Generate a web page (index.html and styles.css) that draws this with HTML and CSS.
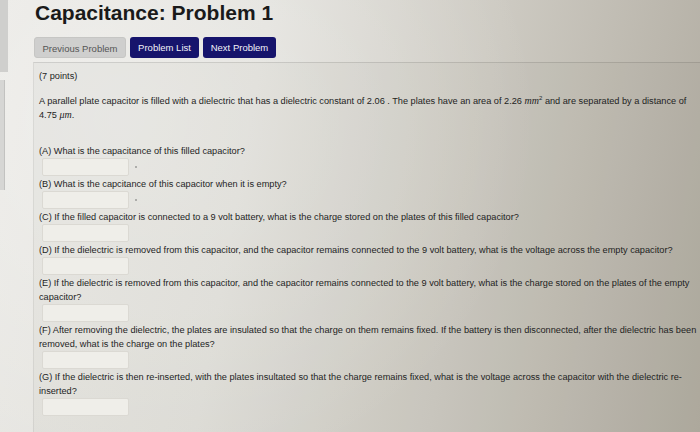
FILE: index.html
```html
<!DOCTYPE html>
<html>
<head>
<meta charset="utf-8">
<link rel="stylesheet" href="styles.css">
</head>
<body>
<div class="page">
  <div class="side">
    <div class="side-top"></div>
    <div class="side-mid"></div>
  </div>
  <div class="main">
    <h1 class="title">Capacitance: Problem 1</h1>
    <div class="nav">
      <span class="btn btn-prev">Previous Problem</span>
      <span class="btn btn-dark btn-list">Problem List</span>
      <span class="btn btn-dark btn-next">Next Problem</span>
    </div>
    <div class="panel">
      <p class="points">(7 points)</p>
      <p class="intro">A parallel plate capacitor is filled with a dielectric that has a dielectric constant of 2.06 . The plates have an area of 2.26 <span class="math">mm</span><sup class="sup">2</sup> and are separated by a distance of<br>4.75 <span class="math">μm</span>.</p>
      <div class="questions">
        <div class="q">
          <p class="qt">(A) What is the capacitance of this filled capacitor?</p>
          <div class="ans"><span class="box"></span><span class="dot"></span></div>
        </div>
        <div class="q">
          <p class="qt">(B) What is the capcitance of this capacitor when it is empty?</p>
          <div class="ans"><span class="box"></span><span class="dot"></span></div>
        </div>
        <div class="q">
          <p class="qt">(C) If the filled capacitor is connected to a 9 volt battery, what is the charge stored on the plates of this filled capacitor?</p>
          <div class="ans"><span class="box"></span></div>
        </div>
        <div class="q">
          <p class="qt">(D) If the dielectric is removed from this capacitor, and the capacitor remains connected to the 9 volt battery, what is the voltage across the empty capacitor?</p>
          <div class="ans"><span class="box"></span></div>
        </div>
        <div class="q">
          <p class="qt">(E) If the dielectric is removed from this capacitor, and the capacitor remains connected to the 9 volt battery, what is the charge stored on the plates of the empty<br>capacitor?</p>
          <div class="ans"><span class="box"></span></div>
        </div>
        <div class="q">
          <p class="qt">(F) After removing the dielectric, the plates are insulated so that the charge on them remains fixed. If the battery is then disconnected, after the dielectric has been<br>removed, what is the charge on the plates?</p>
          <div class="ans"><span class="box"></span></div>
        </div>
        <div class="q">
          <p class="qt">(G) If the dielectric is then re-inserted, with the plates insultated so that the charge remains fixed, what is the voltage across the capacitor with the dielectric re-<br>inserted?</p>
          <div class="ans"><span class="box"></span></div>
        </div>
      </div>
    </div>
  </div>
</div>
</body>
</html>
```
FILE: styles.css
```css
* { box-sizing: border-box; }
html, body { margin: 0; padding: 0; }
body {
  width: 700px;
  height: 432px;
  overflow: hidden;
  font-family: "Liberation Sans", Arial, sans-serif;
  color: #1e1e1e;
  background:
    radial-gradient(ellipse 420px 380px at 120px 120px, rgba(255,255,255,0.35), rgba(255,255,255,0) 100%),
    linear-gradient(100deg, #e9e8e4 0%, #e1e0db 35%, #cdcac2 65%, #b0aba0 100%);
}
.page {
  display: flex;
  height: 432px;
}
.side {
  width: 8px;
  display: flex;
  flex-direction: column;
}
.side-top {
  height: 72px;
  background: #cfcfcd;
}
.side-mid {
  margin-top: 8px;
  width: 5px;
  height: 110px;
  background: #d6d6d4;
  border-right: 1px solid #c2c2c0;
}
.main {
  flex: 1;
  padding-left: 25px;
  display: flex;
  flex-direction: column;
}
.title {
  margin: 0 0 0 2px;
  font-size: 21px;
  line-height: 26px;
  font-weight: bold;
  color: #1a1a1a;
}
.nav {
  display: flex;
  gap: 4px;
  margin-top: 11px;
  margin-left: 1px;
}
.btn {
  height: 21px;
  line-height: 21px;
  font-size: 9.5px;
  border-radius: 3px;
  text-align: center;
}
.btn-prev {
  width: 92px;
  background: #cfcfce;
  color: #555;
  border: 1px solid #c6c6c4;
}
.btn-dark {
  background: #16146c;
  color: #f2f2f8;
}
.btn-list { width: 69px; }
.btn-next { width: 73px; }
.panel {
  flex: 1;
  margin-top: 4px;
  padding: 6px 0 0 5px;
  border-top: 1px solid rgba(0,0,0,0.10);
  border-left: 1px solid rgba(0,0,0,0.06);
  background: rgba(120,115,105,0.05);
}
.panel p {
  margin: 0;
  font-size: 9.2px;
  line-height: 14px;
}
.intro {
  margin-top: 11px !important;
}
.math {
  font-family: "Liberation Serif", "Times New Roman", serif;
  font-style: italic;
  font-size: 10px;
}
.sup {
  font-size: 6px;
  line-height: 0;
  vertical-align: 4px;
}
.questions {
  margin-top: 22px;
  display: flex;
  flex-direction: column;
  gap: 1px;
}
.ans {
  display: flex;
  align-items: center;
  height: 18px;
  padding-left: 3px;
}
.box {
  width: 87px;
  height: 18px;
  background: #efeee9;
  border: 1px solid #dbd9d3;
  border-radius: 2px;
}
.dot {
  width: 2px;
  height: 2px;
  margin-left: 6px;
  background: #9a9a98;
  border-radius: 1px;
}
```
